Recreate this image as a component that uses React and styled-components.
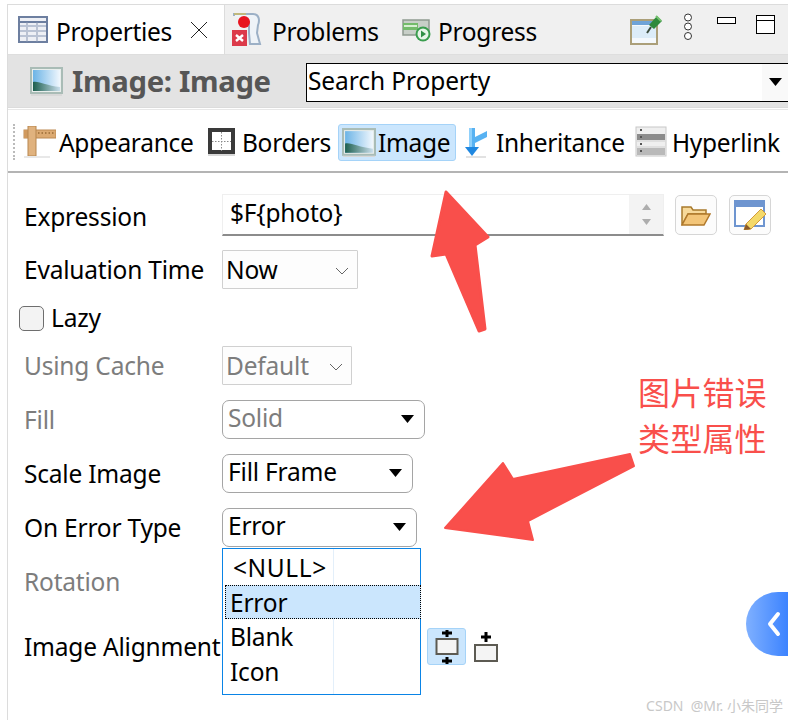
import React from 'react';
import styled, { createGlobalStyle } from 'styled-components';

const Global = createGlobalStyle`
  html, body { margin: 0; padding: 0; background: #fff; }
  * { box-sizing: border-box; }
`;
const FONT = `"Noto Sans", "Open Sans", "Noto Sans CJK SC", sans-serif`;

const Page = styled.div`
  position: relative; width: 788px; height: 720px; overflow: hidden; background: #fff;
  font-family: ${FONT}; font-size: 24.5px; color: #000; line-height: 1; padding-top: 4px;
`;
const Frame = styled.div`
  height: 716px; margin-left: 7px; border-left: 1px solid #dcdcdc; border-top: 1px solid #dcdcdc; display: flex; flex-direction: column;
`;
const TabBar = styled.div`
  height: 50px; background: #f0f0f0; border-bottom: 1px solid #dedede; display: flex; align-items: stretch;
`;
const Tab = styled.div`
  display: flex; align-items: center; gap: ${p => p.$gap || 8}px; padding-left: ${p => p.$pad || 10}px;
  width: ${p => p.$w}px; background: ${p => p.$active ? '#fff' : 'transparent'};
  border-right: ${p => p.$active ? '1px solid #dcdcdc' : 'none'};
  letter-spacing: -.3px;
`;
const TabText = styled.span`padding-top: 5px;`;
const Close = styled.svg`margin-left: 10px; flex: none;`;
const ViewTools = styled.div`margin-left: auto; display: flex; align-items: center; padding-right: 12px; gap: 0;`;
const HeaderBand = styled.div`
  height: 52px; background: #e3e3e3; display: flex; align-items: center; flex: none;
`;
const HeaderTitle = styled.div`
  width: 298px; display: flex; align-items: center; gap: 9px; padding-left: 22px;
  font-weight: 700; font-size: 29.3px; color: #565656; letter-spacing: -.35px;
`;
const TitleText = styled.span`padding-top: 2px;`;
const SearchBox = styled.div`
  flex: 1; height: 39px; margin-top: 2px; background: #fff; border: 1px solid #000; border-right: none; display: flex; align-items: center; justify-content: space-between;
  padding: 0 0 2px 1px; letter-spacing: -.1px;
`;
const SearchArrow = styled.div`
  width: 26px; height: 37px; margin-bottom: -2px; background: #f9f9f9; display: flex; align-items: center; justify-content: center;
`;
const Rule = styled.div`height: 3px; background: #fff; border-top: 1px solid #dcdcdc; border-bottom: 1px solid #e8e8e8; flex: none;`;
const Toolbar = styled.div`
  height: 63px; border-bottom: 2px solid #b4b4b4; display: flex; align-items: center; padding: 3px 0 0 5px; flex: none; margin-top: 0;
`;
const Grip = styled.div`width: 2px; height: 36px; margin-right: 7px; border-left: 2px dotted #bbb;`;
const ToolItem = styled.div`
  display: flex; align-items: center; height: 37px; flex: none;
  width: ${p => p.$w}px; gap: ${p => p.$gap ?? 2}px; padding-left: ${p => p.$pad ?? 0}px;
  background: ${p => p.$active ? '#cbe6fd' : 'transparent'};
  border: 1px solid ${p => p.$active ? '#a5d3f8' : 'transparent'}; border-radius: 3px;
  letter-spacing: -.3px;
`;
const ToolText = styled.span`padding-top: 2px;`;
const Form = styled.div`position: relative; flex: 1; padding: 21px 0 0 16px;`;
const Row = styled.div`
  position: relative; display: grid; grid-template-columns: 198px 1fr; align-items: center;
  height: ${p => p.$h}px; margin-bottom: ${p => p.$mb ?? 15}px;
`;
const Label = styled.div`
  color: ${p => p.$off ? '#7d7d7d' : '#000'}; letter-spacing: -.2px; white-space: nowrap;
  padding-top: ${p => p.$pt ?? 2}px;
`;
const Expression = styled.div`
  width: 442px; height: 42px; border: 1px solid #efefef; border-bottom: 2px solid #8c8c8c; display: flex; justify-content: space-between; padding-left: 7px; align-items: center; padding-bottom: 3px; position: relative; letter-spacing: -.2px;
`;
const Spin = styled.div`
  position: absolute; right: 0; top: 0; bottom: 0; width: 34px; background: #f3f3f3; display: flex; flex-direction: column; align-items: center; justify-content: center; gap: 9px;
`;
const Controls = styled.div`display: flex; align-items: center;`;
const FileBtn = styled.div`
  width: 42px; height: 40px; border: 1px solid #d6d6d6; border-radius: 5px; background: #fcfcfc; display: flex; align-items: center; justify-content: center; margin-left: ${p => p.$ml}px;
`;
const FlatCombo = styled.div`
  width: ${p => p.$w}px; height: 39px; border: 1px solid #d0d0d0; border-radius: 1px; background: #fdfdfd; display: flex; align-items: center; justify-content: space-between; padding: 2px 8px 0 3px;
  color: ${p => p.$off ? '#7d7d7d' : '#000'}; letter-spacing: -.2px;
`;
const RoundCombo = styled.div`
  width: ${p => p.$w}px; height: 39px; border: 1px solid #a5a5a5; border-radius: 7px; background: #fff; display: flex; align-items: center; justify-content: space-between; padding: 0 10px 2px 5px;
  color: ${p => p.$off ? '#7d7d7d' : '#000'}; letter-spacing: -.2px;
`;
const LazyRow = styled.div`display: flex; align-items: center; gap: 7px; height: 27px; margin: 0 0 14px -5px; letter-spacing: -.2px;`;
const Check = styled.div`width: 25px; height: 25px; border: 1.5px solid #6e6e6e; border-radius: 5px; background: #f3f3f3;`;
const DropList = styled.div`
  position: absolute; left: 198px; top: 40px; width: 199px; height: 147px; border: 1px solid #0a84e6; background: #fff; z-index: 3; padding: 1px 0 0 1px;
  &::before { content: ''; position: absolute; left: 110px; top: 0; bottom: 0; width: 1px; background: #e3effa; }
`;
const DropItem = styled.div`
  position: relative; height: ${p => p.$h || 35}px; display: flex; align-items: center; padding: 2px 0 0 ${p => p.$pad || 6}px; width: 196px;
  letter-spacing: ${p => p.$ls || '-.2px'};
  ${p => p.$sel && `background: #cbe6fd; outline: 1px dotted #000; outline-offset: -1px; margin-left: 1px; padding-left: 5px;`}
`;
const AlignSlot = styled.div`display: flex; align-items: center; margin-left: 205px;`;
const AlignBtn = styled.div`
  width: 39px; height: 37px; display: flex; align-items: center; justify-content: center; border-radius: 3px; margin-right: ${p => p.$mr || 0}px;
  background: ${p => p.$active ? '#cbe6fd' : 'transparent'}; border: 1px solid ${p => p.$active ? '#a5d3f8' : 'transparent'};
`;
const Arrows = styled.svg`position: absolute; inset: 0; z-index: 4; pointer-events: none;`;
const Note = styled.div`
  position: absolute; left: 638px; top: ${p => p.$top}px; z-index: 5; color: #f94f4b; font-size: 32px; line-height: 1; letter-spacing: .2px; font-family: "Noto Sans CJK SC", sans-serif; white-space: nowrap;
`;
const SideTab = styled.div`
  position: absolute; right: 0; top: 592px; width: 42px; height: 64px; border-radius: 32px 0 0 32px; z-index: 5;
  background: linear-gradient(90deg, #7fb0ff, #3c83ff); display: flex; align-items: center; justify-content: center; padding-left: 13px;
`;
const Mark = styled.div`
  position: absolute; right: 5px; top: 697px; z-index: 5; color: #c8c8c8; font-size: 14px; line-height: 18px; white-space: pre; font-family: "Noto Sans", "Noto Sans CJK SC", sans-serif;
`;

const ImageIcon = ({ s = 33 }) => (
  <svg width={s} height={s * 30 / 33} viewBox="0 0 33 30" style={{ flex: 'none' }}>
    <defs>
      <linearGradient id="sky" x1="0" x2="1" y1="0" y2="0"><stop offset="0" stopColor="#6cb4e6" /><stop offset="1" stopColor="#f0f7fd" /></linearGradient>
      <linearGradient id="land" x1="0" x2="1" y1="0" y2="0"><stop offset="0" stopColor="#1d5f4e" /><stop offset="1" stopColor="#c9deec" /></linearGradient>
    </defs>
    <rect x="1" y="2" width="31" height="25" fill="#e8eeec" stroke="#a9bcb6" strokeWidth="2" />
    <rect x="3" y="4" width="27" height="21" fill="url(#sky)" />
    <path d="M3 16 C10 15 16 20 30 21 V25 H3Z" fill="url(#land)" />
    <rect x="1" y="28" width="31" height="2" fill="#d8d8d8" />
  </svg>
);
const PropertiesIcon = () => (
  <svg width="30" height="27" viewBox="0 0 30 27" style={{ flex: 'none' }}>
    <rect x="1" y="1" width="28" height="25" fill="#eef0f5" stroke="#6d7fa0" strokeWidth="2" />
    <path d="M1 6h28" stroke="#6d7fa0" strokeWidth="2" />
    <path d="M9 6v20M19 6v20" stroke="#8795b0" />
    <path d="M2 10h26M2 15h26M2 20h26" stroke="#bac3d4" strokeWidth="2" />
  </svg>
);
const ProblemsIcon = () => (
  <svg width="32" height="34" viewBox="0 0 32 34" style={{ flex: 'none' }}>
    <path d="M2 3V1h19c6 0 7 6 5 11l-1 8 3 11H18l-1-11V8" fill="#eef3f8" stroke="#9cb0c6" strokeWidth="2" />
    <path d="M2 1h12" stroke="#c0b87c" strokeWidth="2" />
    <circle cx="12" cy="9" r="6" fill="#e8141f" />
    <rect x="0" y="17" width="15" height="16" fill="#dc3a4a" />
    <path d="M4 22l7 6M11 22l-7 6" stroke="#fff" strokeWidth="2.4" />
  </svg>
);
const ProgressIcon = () => (
  <svg width="30" height="24" viewBox="0 0 30 24" style={{ flex: 'none' }}>
    <rect x="1" y="2" width="26" height="15" fill="#c8cfc8" stroke="#8f9a90" strokeWidth="1.5" />
    <rect x="1" y="5" width="15" height="7" fill="#74bb6b" />
    <rect x="2" y="7" width="13" height="2" fill="#d8efd3" />
    <circle cx="21" cy="16" r="7.5" fill="#3a9d4e" />
    <circle cx="21" cy="16" r="5.5" fill="#e6f5e8" />
    <path d="M19 12.5l5 3.5-5 3.5z" fill="#2f8f45" />
  </svg>
);
const PinIcon = () => (
  <svg width="32" height="30" viewBox="0 0 32 30" style={{ flex: 'none' }}>
    <rect x="1" y="5" width="26" height="24" fill="#f4f8fc" stroke="#ab9f79" strokeWidth="2" />
    <rect x="2" y="6" width="24" height="4" fill="#6ea3d8" />
    <rect x="2" y="11" width="24" height="12" fill="#dcecf8" />
    <path d="M17 18l4-6" stroke="#3a4a3a" strokeWidth="2" />
    <path d="M19 10l8-9 5 5-8 8z" fill="#2f8a3c" />
    <path d="M26 1l5 5" stroke="#74c16e" strokeWidth="2" />
  </svg>
);
const RulerIcon = () => (
  <svg width="33" height="32" viewBox="0 0 33 32" style={{ flex: 'none' }}>
    <rect x="1" y="4" width="32" height="8" fill="#dcaa72" stroke="#bd8a52" />
    <rect x="1" y="4" width="12" height="8" fill="#d19a5f" />
    <rect x="5" y="0" width="8" height="30" fill="#e0b27e" stroke="#b7864f" />
    <path d="M15 7h17" stroke="#a97a44" strokeDasharray="1.5 2" strokeWidth="2" />
    <rect x="1" y="30" width="26" height="2" fill="#e8e8e8" />
  </svg>
);
const BordersIcon = () => (
  <svg width="27" height="28" viewBox="0 0 27 28" style={{ flex: 'none' }}>
    <rect x="2" y="2" width="23" height="22" fill="#fff" stroke="#3a3a3a" strokeWidth="4" />
    <path d="M13.5 4v19M4 13.5h19" stroke="#8a8a8a" strokeDasharray="1.5 1.5" />
    <rect x="0" y="26" width="27" height="2" fill="#d8d8d8" />
  </svg>
);
const InheritIcon = () => (
  <svg width="24" height="32" viewBox="0 0 24 32" style={{ flex: 'none' }}>
    <path d="M5 2h6v9l12-6v6l-12 6v6H5z" fill="#58b2f2" />
    <path d="M5 2h3v24H5z" fill="#8fd0fb" />
    <path d="M1 21h14l-7 9z" fill="#1f87e0" />
    <rect x="2" y="30" width="20" height="2" fill="#e2e2e2" />
  </svg>
);
const HyperlinkIcon = () => (
  <svg width="32" height="32" viewBox="0 0 32 32" style={{ flex: 'none' }}>
    <rect x="1" y="1" width="30" height="29" fill="#efefef" stroke="#c8c8c8" />
    <rect x="2" y="8" width="28" height="6" fill="#8c8c8c" />
    <rect x="2" y="22" width="28" height="7" fill="#b9b9b9" />
    <path d="M2 15h28M2 21h28" stroke="#cfcfcf" />
    <path d="M5 4h2M5 11h2M5 18h2M5 25h2" stroke="#555" strokeWidth="2" />
  </svg>
);
const Chevron = ({ c = '#666' }) => (
  <svg width="14" height="8" viewBox="0 0 14 8"><path d="M1 1l6 6 6-6" fill="none" stroke={c} strokeWidth="1" /></svg>
);
const Caret = () => (
  <svg width="13" height="8" viewBox="0 0 13 8"><path d="M0 0h13L6.5 8z" fill="#000" /></svg>
);
const FolderIcon = () => (
  <svg width="30" height="23" viewBox="0 0 30 23">
    <path d="M1 21V3h9l2 3h13v4H7L1 21z" fill="#f7d99a" stroke="#a87a2c" strokeWidth="1.5" />
    <path d="M1 21l6-11h22l-6 11z" fill="#f3c578" stroke="#b0782a" strokeWidth="1.5" />
  </svg>
);
const EditIcon = () => (
  <svg width="32" height="30" viewBox="0 0 32 30">
    <rect x="1" y="1" width="29" height="25" fill="#fff" stroke="#6e95d0" strokeWidth="2" />
    <rect x="1" y="1" width="29" height="6" fill="#6e95d0" />
    <path d="M12 24L27 9l5 5-15 15-7 1z" fill="#f4d96a" stroke="#d29b3c" />
    <path d="M10 30l2-6 5 5z" fill="#8a5a2a" />
  </svg>
);
const AlignMid = () => (
  <svg width="26" height="34" viewBox="0 0 26 34">
    <rect x="2.500" y="9" width="21" height="15" fill="#f4f4f4" stroke="#5c5a52" strokeWidth="2" />
    <path d="M8 3h10M13 0v7M8 31h10M13 27v7" stroke="#000" strokeWidth="3" />
  </svg>
);
const AlignTop = () => (
  <svg width="26" height="32" viewBox="0 0 26 32">
    <rect x="2" y="14" width="22" height="16" fill="#f4f4f4" stroke="#5c5a52" strokeWidth="2" />
    <path d="M13 1v10M8 6h10" stroke="#000" strokeWidth="3" />
  </svg>
);

export default function App() {
  return (
    <Page>
      <Global />
      <Frame>
        <TabBar>
          <Tab $active $w={217} $pad={10} $gap={8}>
            <PropertiesIcon /><TabText>Properties</TabText>
            <Close width="18" height="18" viewBox="0 0 18 18"><path d="M1 1l16 16M17 1L1 17" stroke="#222" strokeWidth="1" /></Close>
          </Tab>
          <Tab $w={169} $pad={7} $gap={8}><ProblemsIcon /><TabText>Problems</TabText></Tab>
          <Tab $w={160} $pad={8} $gap={6}><ProgressIcon /><TabText>Progress</TabText></Tab>
          <ViewTools>
            <PinIcon />
            <svg width="14" height="28" viewBox="0 0 14 28" style={{ marginLeft: 19, marginTop: -5 }}>
              <circle cx="7" cy="4.500" r="3.500" fill="#fff" stroke="#333" /><circle cx="7" cy="13.500" r="3.500" fill="#fff" stroke="#333" /><circle cx="7" cy="23" r="3.500" fill="#fff" stroke="#333" />
            </svg>
            <svg width="20" height="8" viewBox="0 0 20 8" style={{ marginLeft: 22, marginTop: -18 }}><rect x=".5" y=".5" width="18" height="6" fill="#fff" stroke="#000" /></svg>
            <svg width="20" height="20" viewBox="0 0 20 20" style={{ marginLeft: 19, marginTop: -9 }}><rect x=".5" y=".5" width="18" height="18" fill="#fff" stroke="#000" /><path d="M0 5.500h19" stroke="#000" /></svg>
          </ViewTools>
        </TabBar>
        <HeaderBand>
          <HeaderTitle><ImageIcon /><TitleText>Image: Image</TitleText></HeaderTitle>
          <SearchBox>Search Property<SearchArrow><Caret /></SearchArrow></SearchBox>
        </HeaderBand>
        <Rule />
        <Toolbar>
          <Grip />
          <ToolItem $w={185} $gap={3} ><RulerIcon /><ToolText>Appearance</ToolText></ToolItem>
          <ToolItem $w={131} $gap={7} ><BordersIcon /><ToolText>Borders</ToolText></ToolItem>
          <ToolItem $w={118} $active $pad={3} $gap={2}><ImageIcon s={34} /><ToolText>Image</ToolText></ToolItem>
          <ToolItem $w={178} $gap={8} $pad={7}><InheritIcon /><ToolText>Inheritance</ToolText></ToolItem>
          <ToolItem $w={150} $gap={5} ><HyperlinkIcon /><ToolText>Hyperlink</ToolText></ToolItem>
        </Toolbar>
        <Form>
          <Row $h={42} $mb={14}>
            <Label $pt={4}>Expression</Label>
            <Controls>
              <Expression>$F{'{'}photo{'}'}
                <Spin>
                  <svg width="9" height="6" viewBox="0 0 9 6"><path d="M0 6h9L4.500 0z" fill="#adadad" /></svg>
                  <svg width="9" height="6" viewBox="0 0 9 6"><path d="M0 0h9L4.500 6z" fill="#adadad" /></svg>
                </Spin>
              </Expression>
              <FileBtn $ml={11}><FolderIcon /></FileBtn>
              <FileBtn $ml={12}><EditIcon /></FileBtn>
            </Controls>
          </Row>
          <Row $h={39} $mb={16}>
            <Label>Evaluation Time</Label>
            <FlatCombo $w={136}>Now<Chevron /></FlatCombo>
          </Row>
          <LazyRow><Check />Lazy</LazyRow>
          <Row $h={39}>
            <Label $off>Using Cache</Label>
            <FlatCombo $w={130} $off>Default<Chevron /></FlatCombo>
          </Row>
          <Row $h={39}>
            <Label $off>Fill</Label>
            <RoundCombo $w={203} $off>Solid<Caret /></RoundCombo>
          </Row>
          <Row $h={39}>
            <Label>Scale Image</Label>
            <RoundCombo $w={191}>Fill Frame<Caret /></RoundCombo>
          </Row>
          <Row $h={39}>
            <Label>On Error Type</Label>
            <RoundCombo $w={195}>Error<Caret /></RoundCombo>
            <DropList>
              <DropItem $h={35} $pad={9} $ls=".6px">&lt;NULL&gt;</DropItem>
              <DropItem $h={34} $sel>Error</DropItem>
              <DropItem>Blank</DropItem>
              <DropItem>Icon</DropItem>
            </DropList>
          </Row>
          <Row $h={39} $mb={26}>
            <Label $off>Rotation</Label>
          </Row>
          <Row $h={39}>
            <Label>Image Alignment</Label>
            <AlignSlot>
              <AlignBtn $active $mr={0}><AlignMid /></AlignBtn>
              <AlignBtn><AlignTop /></AlignBtn>
            </AlignSlot>
          </Row>
        </Form>
      </Frame>
      <Arrows width="788" height="720" viewBox="0 0 788 720">
        <path d="M446 192L488 237L475 245L485 329L479 331L446 254L432 256Z" fill="#f94f4b" stroke="#f94f4b" strokeWidth="3" strokeLinejoin="round" />
        <path d="M630 454L634 466L528 521L533 540L445 528L503 463L513 479Z" fill="#f94f4b" stroke="#f94f4b" strokeWidth="2" strokeLinejoin="round" />
      </Arrows>
      <Note $top={375}>图片错误</Note>
      <Note $top={421}>类型属性</Note>
      <SideTab>
        <svg width="14" height="26" viewBox="0 0 14 26"><path d="M11 3L3 13l8 10" fill="none" stroke="#fff" strokeWidth="4" strokeLinecap="round" strokeLinejoin="round" /></svg>
      </SideTab>
      <Mark>{'CSDN  @Mr. 小朱同学'}</Mark>
    </Page>
  );
}
